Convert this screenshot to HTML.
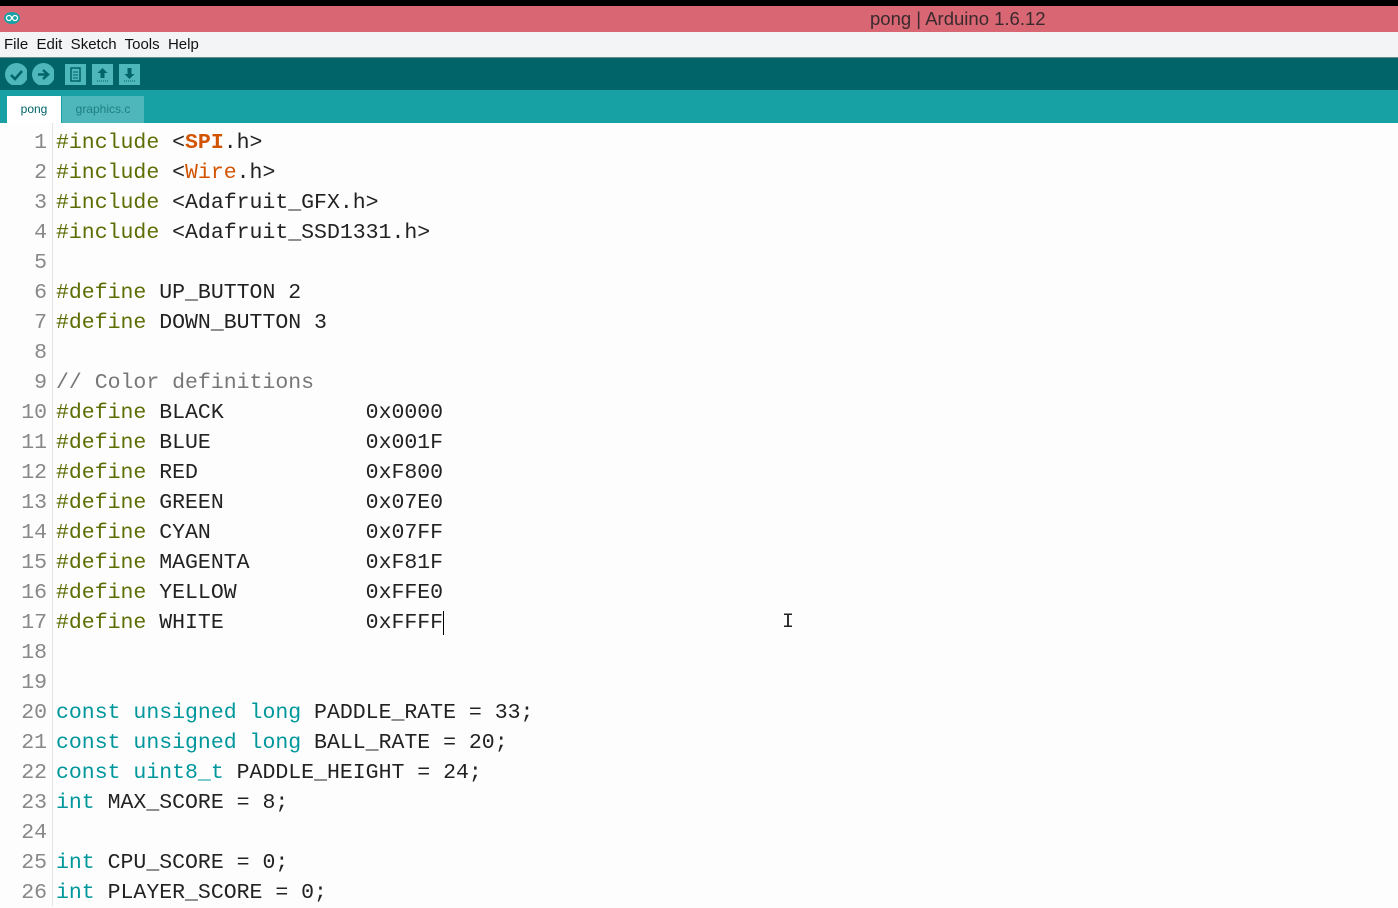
<!DOCTYPE html>
<html><head><style>
body{margin:0;width:1398px;height:906px;overflow:hidden;background:#fdfdfd;font-family:"Liberation Sans",sans-serif;position:relative}
#blk{position:absolute;left:0;top:0;width:1398px;height:6px;background:#000}
#title{position:absolute;left:0;top:6px;width:1398px;height:26px;background:#d86673;color:#3a2a2e;font-size:18.5px;line-height:26px}
#menu{position:absolute;left:0;top:32px;width:1398px;height:25px;background:#f3f4f6;border-bottom:1px solid #6a8b8c;font-size:15px;line-height:26px;color:#111}
#tool{position:absolute;left:0;top:58px;width:1398px;height:32px;background:#006468}
#tabs{position:absolute;left:0;top:90px;width:1398px;height:33px;background:#17a1a5}
.tab{position:absolute;top:6px;height:27px;font-size:12px;line-height:26px;text-align:center}
.code{position:absolute;left:0;top:128px;font-family:"Liberation Mono",monospace;font-size:21.5px;line-height:30px;white-space:pre;color:#222}
.num{position:absolute;left:0;top:128px;width:47px;text-align:right;font-family:"Liberation Mono",monospace;font-size:21.5px;line-height:30px;color:#888;white-space:pre}
#gut{position:absolute;left:52px;top:123px;width:1px;height:783px;background:#e4e4e4}
.p{color:#5e6d03}.k{color:#00979c}.o{color:#d35400}.c{color:#777}
.ic{position:absolute;top:63px;width:22px;height:22px}
</style></head><body>
<div id="blk"></div>
<div id="title"><svg style="position:absolute;left:3px;top:5px" width="18" height="14"><ellipse cx="9" cy="7" rx="8" ry="6" fill="#17a1a5"/><circle cx="6" cy="7" r="2.5" fill="none" stroke="#fff" stroke-width="1.3"/><circle cx="12" cy="7" r="2.5" fill="none" stroke="#fff" stroke-width="1.3"/></svg><span style="position:absolute;left:870px">pong | Arduino 1.6.12</span></div>
<div id="menu"><span style="position:absolute;left:4px">File&nbsp; Edit&nbsp; Sketch&nbsp; Tools&nbsp; Help</span></div>
<div id="tool">
<svg class="ic" style="left:5px;top:5px" width="23" height="23"><circle cx="11.5" cy="11.5" r="11.5" fill="#4db7bb"/><path d="M6 12l4 4 7-8" stroke="#006468" stroke-width="2.5" fill="none"/></svg>
<svg class="ic" style="left:32px;top:5px" width="23" height="23"><circle cx="11.5" cy="11.5" r="11.5" fill="#4db7bb"/><path d="M6 11.5h9M11 7l5 4.5-5 4.5" stroke="#006468" stroke-width="2.5" fill="none"/></svg>
<svg class="ic" style="left:65px;top:6px" width="21" height="21"><rect width="21" height="21" fill="#4db7bb"/><rect x="6" y="4" width="9" height="13" fill="none" stroke="#006468" stroke-width="1.5"/><path d="M8 8h5M8 11h5M8 14h5" stroke="#006468"/></svg>
<svg class="ic" style="left:92px;top:6px" width="21" height="21"><rect width="21" height="21" fill="#4db7bb"/><path d="M10.5 4l5 5h-3v5h-4v-5h-3z" fill="#006468"/><path d="M5 17h11" stroke="#006468" stroke-dasharray="1 1"/></svg>
<svg class="ic" style="left:119px;top:6px" width="21" height="21"><rect width="21" height="21" fill="#4db7bb"/><path d="M10.5 15l5-5h-3v-6h-4v6h-3z" fill="#006468"/><path d="M5 17h11" stroke="#006468" stroke-dasharray="1 1"/></svg>
</div>
<div id="tabs">
<div class="tab" style="left:7px;width:54px;background:#fff;color:#006468">pong</div>
<div class="tab" style="left:62px;width:82px;background:#4db7bb;color:#1e7e82">graphics.c</div>
</div>
<div id="gut"></div>
<div class="num"> 1
 2
 3
 4
 5
 6
 7
 8
 9
10
11
12
13
14
15
16
17
18
19
20
21
22
23
24
25
26</div>
<div class="code" style="left:56px"><span class="p">#include</span> &lt;<b class="o">SPI</b>.h&gt;
<span class="p">#include</span> &lt;<span class="o">Wire</span>.h&gt;
<span class="p">#include</span> &lt;Adafruit_GFX.h&gt;
<span class="p">#include</span> &lt;Adafruit_SSD1331.h&gt;

<span class="p">#define</span> UP_BUTTON 2
<span class="p">#define</span> DOWN_BUTTON 3

<span class="c">// Color definitions</span>
<span class="p">#define</span> BLACK           0x0000
<span class="p">#define</span> BLUE            0x001F
<span class="p">#define</span> RED             0xF800
<span class="p">#define</span> GREEN           0x07E0
<span class="p">#define</span> CYAN            0x07FF
<span class="p">#define</span> MAGENTA         0xF81F
<span class="p">#define</span> YELLOW          0xFFE0
<span class="p">#define</span> WHITE           0xFFFF<span style="border-left:1.5px solid #000;margin-left:0"></span>


<span class="k">const</span> <span class="k">unsigned</span> <span class="k">long</span> PADDLE_RATE = 33;
<span class="k">const</span> <span class="k">unsigned</span> <span class="k">long</span> BALL_RATE = 20;
<span class="k">const</span> <span class="k">uint8_t</span> PADDLE_HEIGHT = 24;
<span class="k">int</span> MAX_SCORE = 8;

<span class="k">int</span> CPU_SCORE = 0;
<span class="k">int</span> PLAYER_SCORE = 0;</div>
<div style="position:absolute;left:782px;top:611px;font-family:'Liberation Mono',monospace;font-size:20px;color:#222">I</div>
</body></html>
